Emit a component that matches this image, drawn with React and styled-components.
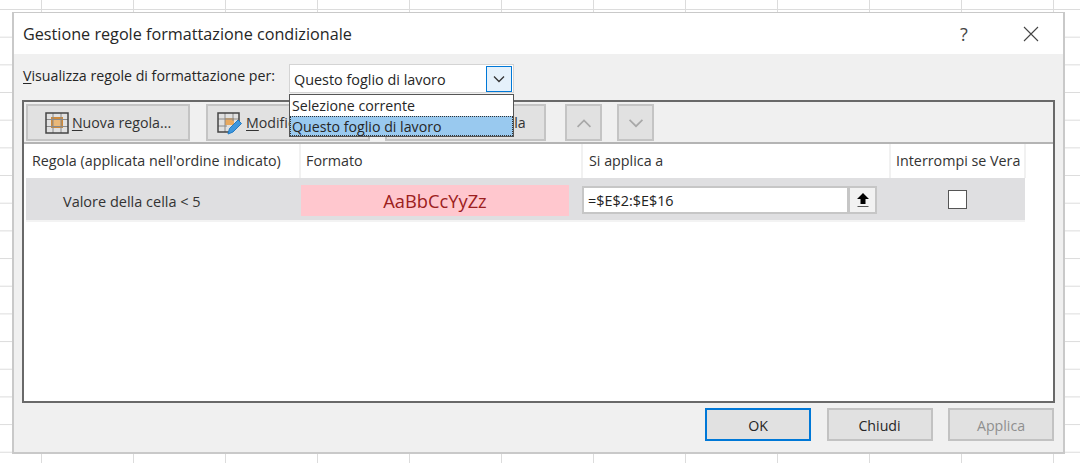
import React from 'react';
import styled, { createGlobalStyle } from 'styled-components';

const GlobalStyle = createGlobalStyle`
    html, body {
        margin: 0;
        padding: 0;
        height: 463px;
        overflow: hidden;
    }
    body {
        font-family: 'Open Sans', 'Noto Sans', 'Liberation Sans', sans-serif;
        color: #262626;
        background-color: #fff;
        background-image:
            linear-gradient(to right, #dcdcdc 1px, transparent 1px),
            linear-gradient(to bottom, #dcdcdc 1px, transparent 1px);
        background-size: 92px 27.68px;
        background-position: 41px 9px;
    }
`;

const Dialog = styled.div`
    box-sizing: border-box;
    width: 1053px;
    height: 442px;
    margin: 12px 0 0 12px;
    background: #f0f0f0;
    border: 1px solid #c9c9c9;
    border-width: 1px 2px 2px 2px;
    display: flex;
    flex-direction: column;
`;

const TitleBar = styled.div`
    height: 41px;
    flex: none;
    background: #fff;
    display: flex;
    align-items: center;
    padding-left: 9px;
`;

const Title = styled.div`
    font-size: 16.2px;
    flex: 1;
`;

const Help = styled.div`
    font-size: 18px;
    width: 20px;
    text-align: center;
    margin-right: 49px;
    color: #444;
`;

const CloseIcon = styled.svg`
    width: 16px;
    height: 16px;
    margin-right: 24px;
`;

const Body = styled.div`
    flex: 1;
    padding: 0 8px;
    display: flex;
    flex-direction: column;
`;

const FilterRow = styled.div`
    height: 46px;
    flex: none;
    display: flex;
    align-items: flex-start;
    position: relative;
`;

const FilterLabel = styled.label`
    font-size: 14.2px;
    width: 266px;
    margin: 12px 0 0 1px;
    flex: none;
`;

const Select = styled.div`
    box-sizing: border-box;
    width: 225px;
    height: 29px;
    margin-top: 10px;
    background: #fff;
    border: 1px solid #d4d4d4;
    display: flex;
    align-items: center;
    justify-content: space-between;
    padding-left: 4px;
    font-size: 14.4px;
`;

const SelectValue = styled.span`
    margin-top: 2px;
`;

const SelectArrow = styled.div`
    box-sizing: border-box;
    width: 26px;
    height: 26px;
    margin-right: 1px;
    border: 1px solid #0078d7;
    background: #e5f1fb;
    display: flex;
    align-items: center;
    justify-content: center;
`;

const DropList = styled.ul`
    position: absolute;
    left: 267px;
    top: 40px;
    box-sizing: border-box;
    width: 225px;
    margin: 0;
    padding: 0;
    list-style: none;
    background: #fff;
    border: 1px solid #555;
    font-size: 14.2px;
    z-index: 5;
`;

const DropItem = styled.li`
    box-sizing: border-box;
    height: 20.5px;
    line-height: 22px;
    padding-left: 2px;
    white-space: nowrap;
    background: ${(p) => (p.$active ? '#99c9ef' : '#fff')};
    outline: ${(p) => (p.$active ? '1px dotted #333' : 'none')};
    outline-offset: -1px;
`;

const Panel = styled.div`
    box-sizing: border-box;
    width: 1033px;
    height: 303px;
    flex: none;
    border: 2px solid #696969;
    background: #fff;
    display: flex;
    flex-direction: column;
`;

const Toolbar = styled.div`
    height: 42px;
    flex: none;
    box-sizing: border-box;
    background: #f0f0f0;
    border-bottom: 2px solid #b4b4b4;
    display: flex;
    align-items: flex-start;
    padding: 2px 0 0 2px;
`;

const ToolButton = styled.div`
    box-sizing: border-box;
    width: ${(p) => p.$w}px;
    height: 37px;
    margin-right: ${(p) => p.$gap}px;
    flex: none;
    background: #e1e1e1;
    border: 2px solid #c4c4c4;
    display: flex;
    align-items: center;
    justify-content: center;
    gap: 3px;
    font-size: 14.2px;
    color: #333;
    white-space: nowrap;
`;

const Underline = styled.span`
    text-decoration: underline;
    text-underline-offset: 2px;
`;

const TableHead = styled.div`
    height: 34px;
    flex: none;
    display: flex;
    padding-left: 2px;
`;

const HeadCell = styled.div`
    box-sizing: border-box;
    width: ${(p) => p.$w}px;
    border-right: 2px solid #f1f1f1;
    padding-left: ${(p) => p.$pad}px;
    font-size: 14.3px;
    line-height: 33px;
    white-space: nowrap;
    color: #333;
`;

const RuleRow = styled.div`
    width: 999px;
    height: 42px;
    margin-left: 2px;
    flex: none;
    background: #dfdfe1;
    border-bottom: 2px solid #f3f3f3;
    display: flex;
    align-items: center;
`;

const RuleName = styled.div`
    width: 275px;
    flex: none;
    box-sizing: border-box;
    padding: 4px 0 0 37px;
    font-size: 14.5px;
    color: #333;
`;

const Preview = styled.div`
    width: 268px;
    height: 31px;
    flex: none;
    background: #ffc7ce;
    color: #9c2020;
    font-size: 18.3px;
    line-height: 31px;
    text-align: center;
    margin: 3px 13px 0 0;
`;

const RangeInput = styled.div`
    box-sizing: border-box;
    width: 295px;
    height: 28px;
    flex: none;
    margin-top: 2px;
    background: #fff;
    border: 2px solid #c6c6c6;
    display: flex;
    align-items: stretch;
    justify-content: space-between;
    padding-left: 4px;
    font-size: 14.4px;
    line-height: 25px;
    color: #222;
`;

const RangeButton = styled.div`
    width: 25px;
    background: #f2f2f2;
    border-left: 3px solid #c6c6c6;
    display: flex;
    align-items: center;
    justify-content: center;
`;

const CheckCell = styled.div`
    flex: 1;
    display: flex;
    justify-content: center;
    padding-left: 13px;
`;

const Check = styled.div`
    box-sizing: border-box;
    width: 19px;
    height: 19px;
    background: #fff;
    border: 1px solid #555;
`;

const Footer = styled.div`
    flex: 1;
    display: flex;
    justify-content: flex-end;
    gap: 15.5px;
    padding: 5px 1px 0 0;
`;

const DialogButton = styled.div`
    box-sizing: border-box;
    width: 106px;
    height: 33px;
    padding-top: 2px;
    background: #e1e1e1;
    border: 2px solid ${(p) => (p.$primary ? '#0078d7' : '#c2c2c2')};
    color: ${(p) => (p.$disabled ? '#8f8f8f' : '#262626')};
    font-size: 14.2px;
    display: flex;
    align-items: center;
    justify-content: center;
`;

const TableIcon = () => (
    <svg width="24" height="22" viewBox="0 0 24 22">
        <rect x="7" y="6" width="10" height="9" fill="#eab878" stroke="#cf8a3a" strokeWidth="2" />
        <path d="M8 1v20M16 1v20M1 7.5h22M1 14.5h22" stroke="#8a8a8a" strokeWidth="1" fill="none" />
        <rect x="1" y="1" width="22" height="20" fill="none" stroke="#444" strokeWidth="1.5" />
    </svg>
);

const EditIcon = () => (
    <svg width="26" height="24" viewBox="0 0 26 24">
        <rect x="8" y="7" width="9" height="7" fill="#e8a95f" />
        <path d="M8 2v19M16 2v8M1 8h21M1 15h9" stroke="#8a8a8a" strokeWidth="1" fill="none" />
        <path d="M12 21H1V2h21v8" fill="none" stroke="#444" strokeWidth="1.5" />
        <path d="M11 23l1.5-5.5L21 9l3.5 3.5L16 21z" fill="#3f97dd" stroke="#1f7ac4" strokeWidth="1" />
    </svg>
);

const DeleteIcon = () => (
    <svg width="24" height="22" viewBox="0 0 24 22">
        <rect x="1" y="1" width="22" height="20" fill="none" stroke="#444" strokeWidth="1.5" />
    </svg>
);

const Chevron = ({ dir, color, size = 14 }) => (
    <svg width={size} height={size} viewBox="0 0 14 14">
        <path d={dir === 'up' ? 'M2 10l5-5 5 5' : 'M2 4.5l5 5 5-5'} fill="none" stroke={color} strokeWidth="1.3" />
    </svg>
);

const columns = [
    { label: "Regola (applicata nell'ordine indicato)", w: 275, pad: 6 },
    { label: 'Formato', w: 282, pad: 5 },
    { label: 'Si applica a', w: 308, pad: 6 },
    { label: 'Interrompi se Vera', w: 135, pad: 5 },
];

export default function App() {
    return (
        <>
            <GlobalStyle />
            <Dialog>
                <TitleBar>
                    <Title>Gestione regole formattazione condizionale</Title>
                    <Help>?</Help>
                    <CloseIcon viewBox="0 0 16 16">
                        <path d="M1 1l14 14M15 1L1 15" stroke="#444" strokeWidth="1.1" fill="none" />
                    </CloseIcon>
                </TitleBar>
                <Body>
                    <FilterRow>
                        <FilterLabel>
                            <Underline>V</Underline>isualizza regole di formattazione per:
                        </FilterLabel>
                        <Select>
                            <SelectValue>Questo foglio di lavoro</SelectValue>
                            <SelectArrow>
                                <Chevron dir="down" color="#333" />
                            </SelectArrow>
                        </Select>
                        <DropList>
                            <DropItem>Selezione corrente</DropItem>
                            <DropItem $active>Questo foglio di lavoro</DropItem>
                        </DropList>
                    </FilterRow>
                    <Panel>
                        <Toolbar>
                            <ToolButton $w={164} $gap={16}>
                                <TableIcon />
                                <span>
                                    <Underline>N</Underline>uova regola...
                                </span>
                            </ToolButton>
                            <ToolButton $w={164} $gap={15}>
                                <EditIcon />
                                <span>
                                    <Underline>M</Underline>odifica regola...
                                </span>
                            </ToolButton>
                            <ToolButton $w={161} $gap={19}>
                                <DeleteIcon />
                                <span>
                                    <Underline>E</Underline>limina regola
                                </span>
                            </ToolButton>
                            <ToolButton $w={37} $gap={15}>
                                <Chevron dir="up" color="#a8a8a8" size={18} />
                            </ToolButton>
                            <ToolButton $w={37} $gap={0}>
                                <Chevron dir="down" color="#a8a8a8" size={18} />
                            </ToolButton>
                        </Toolbar>
                        <TableHead>
                            {columns.map((c) => (
                                <HeadCell key={c.label} $w={c.w} $pad={c.pad}>
                                    {c.label}
                                </HeadCell>
                            ))}
                        </TableHead>
                        <RuleRow>
                            <RuleName>Valore della cella &lt; 5</RuleName>
                            <Preview>AaBbCcYyZz</Preview>
                            <RangeInput>
                                =$E$2:$E$16
                                <RangeButton>
                                    <svg width="14" height="16" viewBox="0 0 14 16">
                                        <path d="M7 1l6 6H9.5v5h-5V7H1z" fill="#000" />
                                        <path d="M1.5 14.5h11" stroke="#555" strokeWidth="1" />
                                    </svg>
                                </RangeButton>
                            </RangeInput>
                            <CheckCell>
                                <Check />
                            </CheckCell>
                        </RuleRow>
                    </Panel>
                    <Footer>
                        <DialogButton $primary>OK</DialogButton>
                        <DialogButton>Chiudi</DialogButton>
                        <DialogButton $disabled>Applica</DialogButton>
                    </Footer>
                </Body>
            </Dialog>
        </>
    );
}
